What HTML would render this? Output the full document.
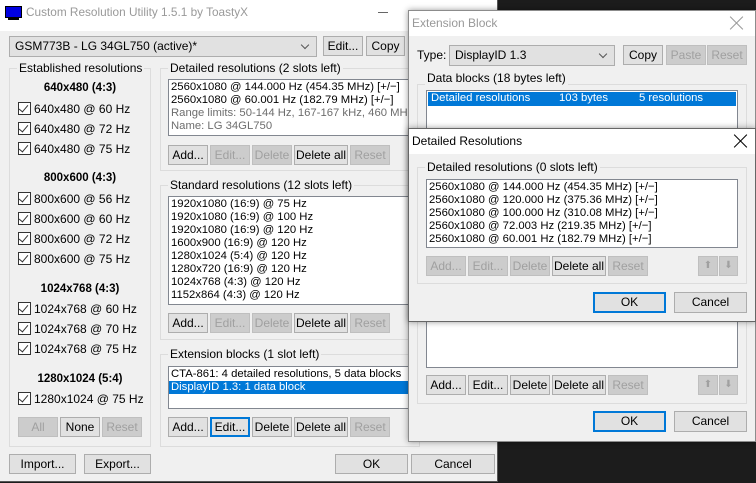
<!DOCTYPE html>
<html><head><meta charset="utf-8"><style>
*{box-sizing:border-box;margin:0;padding:0}
body{width:756px;height:483px;background:#1c1c1c;position:relative;overflow:hidden;font:12px "Liberation Sans",sans-serif;color:#000}
.a{position:absolute}
.win{position:absolute;background:#f0f0f0;border:1px solid #8c8c8c}
.b{position:absolute;height:20px;border:1px solid #adadad;background:#e1e1e1;text-align:center;line-height:18px;font-size:12px;white-space:nowrap}
.d{color:#a0a0a0;border-color:#bfbfbf;background:#cccccc}
.f{border:2px solid #0078d7;line-height:16px}
.g{position:absolute;border:1px solid #dcdcdc}
.gl{position:absolute;background:#f0f0f0;padding:0 2px;white-space:nowrap;line-height:14px}
.l{position:absolute;background:#fff;border:1px solid #828790;padding:1px 2px;line-height:13px;white-space:nowrap;overflow:hidden;font-size:11.3px}
.gray{color:#6d6d6d}
.sel{background:#0078d7;color:#fff;margin:0 -2px;padding:0 2px}
.cb{position:absolute;white-space:nowrap;line-height:14px;padding-left:16px}
.cb:before{content:"";position:absolute;left:0;top:0;width:11px;height:11px;border:1px solid #333;background:#fff}
.cb:after{content:"";position:absolute;left:3px;top:1px;width:4px;height:8px;border:solid #333;border-width:0 1px 1px 0;transform:rotate(40deg)}
.hd{position:absolute;font-weight:bold;text-align:center;width:142px;left:9px;font-size:11.5px}
.combo{position:absolute;height:21px;border:1px solid #adadad;background:#e1e1e1;line-height:19px;padding-left:5px}
.combo:after{content:"";position:absolute;right:8px;top:5px;width:5px;height:5px;border:solid #555;border-width:0 1px 1px 0;transform:rotate(45deg)}
.x{position:absolute;width:14px;height:14px}
.x:before,.x:after{content:"";position:absolute;left:6px;top:-2px;width:1px;height:18px;background:currentColor;transform:rotate(45deg)}
.x:after{transform:rotate(-45deg)}
</style></head><body>

<!-- main window -->
<div class="win" style="left:-1px;top:-1px;width:499px;height:483px;border-color:#555">
<div class="a" style="left:0;top:0;width:497px;height:31px;background:#fff"></div>
</div>
<div class="a" style="left:5px;top:6px;width:17px;height:12px;background:#0000e0;border:1px solid #000"></div>
<div class="a" style="left:8px;top:18px;width:11px;height:2px;background:#000"></div>
<div class="a" style="left:26px;top:5px;color:#999;font-size:11.8px">Custom Resolution Utility 1.5.1 by ToastyX</div>
<div class="a" style="left:378px;top:12px;width:10px;height:1px;background:#666"></div>

<div class="combo" style="left:9px;top:36px;width:308px">GSM773B - LG 34GL750 (active)*</div>
<div class="b" style="left:323px;top:36px;width:40px">Edit...</div>
<div class="b" style="left:366px;top:36px;width:39px">Copy</div>

<div class="g" style="left:9px;top:68px;width:142px;height:379px"></div>
<div class="gl" style="left:17px;top:61px">Established resolutions</div>
<div class="hd" style="top:82px">640x480 (4:3)</div>
<div class="cb" style="left:18px;top:102px">640x480 @ 60 Hz</div>
<div class="cb" style="left:18px;top:122px">640x480 @ 72 Hz</div>
<div class="cb" style="left:18px;top:142px">640x480 @ 75 Hz</div>
<div class="hd" style="top:172px">800x600 (4:3)</div>
<div class="cb" style="left:18px;top:192px">800x600 @ 56 Hz</div>
<div class="cb" style="left:18px;top:212px">800x600 @ 60 Hz</div>
<div class="cb" style="left:18px;top:232px">800x600 @ 72 Hz</div>
<div class="cb" style="left:18px;top:252px">800x600 @ 75 Hz</div>
<div class="hd" style="top:283px">1024x768 (4:3)</div>
<div class="cb" style="left:18px;top:302px">1024x768 @ 60 Hz</div>
<div class="cb" style="left:18px;top:322px">1024x768 @ 70 Hz</div>
<div class="cb" style="left:18px;top:342px">1024x768 @ 75 Hz</div>
<div class="hd" style="top:373px">1280x1024 (5:4)</div>
<div class="cb" style="left:18px;top:392px">1280x1024 @ 75 Hz</div>
<div class="b d" style="left:18px;top:417px;width:40px">All</div>
<div class="b" style="left:60px;top:417px;width:40px">None</div>
<div class="b d" style="left:102px;top:417px;width:40px">Reset</div>

<div class="g" style="left:160px;top:68px;width:260px;height:103px"></div>
<div class="gl" style="left:168px;top:61px">Detailed resolutions (2 slots left)</div>
<div class="l" style="left:168px;top:79px;width:250px;height:57px">2560x1080 @ 144.000 Hz (454.35 MHz) [+/&minus;]<br>2560x1080 @ 60.001 Hz (182.79 MHz) [+/&minus;]<br><span class="gray">Range limits: 50-144 Hz, 167-167 kHz, 460 MHz<br>Name: LG 34GL750</span></div>
<div class="b" style="left:168px;top:145px;width:40px">Add...</div>
<div class="b d" style="left:210px;top:145px;width:40px">Edit...</div>
<div class="b d" style="left:252px;top:145px;width:40px">Delete</div>
<div class="b" style="left:294px;top:145px;width:54px">Delete all</div>
<div class="b d" style="left:350px;top:145px;width:40px">Reset</div>

<div class="g" style="left:160px;top:185px;width:260px;height:155px"></div>
<div class="gl" style="left:168px;top:178px">Standard resolutions (12 slots left)</div>
<div class="l" style="left:168px;top:196px;width:250px;height:109px">1920x1080 (16:9) @ 75 Hz<br>1920x1080 (16:9) @ 100 Hz<br>1920x1080 (16:9) @ 120 Hz<br>1600x900 (16:9) @ 120 Hz<br>1280x1024 (5:4) @ 120 Hz<br>1280x720 (16:9) @ 120 Hz<br>1024x768 (4:3) @ 120 Hz<br>1152x864 (4:3) @ 120 Hz</div>
<div class="b" style="left:168px;top:313px;width:40px">Add...</div>
<div class="b d" style="left:210px;top:313px;width:40px">Edit...</div>
<div class="b d" style="left:252px;top:313px;width:40px">Delete</div>
<div class="b" style="left:294px;top:313px;width:54px">Delete all</div>
<div class="b d" style="left:350px;top:313px;width:40px">Reset</div>

<div class="g" style="left:160px;top:354px;width:260px;height:93px"></div>
<div class="gl" style="left:168px;top:347px">Extension blocks (1 slot left)</div>
<div class="l" style="left:168px;top:366px;width:250px;height:43px">CTA-861: 4 detailed resolutions, 5 data blocks<br><div class="sel">DisplayID 1.3: 1 data block</div></div>
<div class="b" style="left:168px;top:417px;width:40px">Add...</div>
<div class="b f" style="left:210px;top:417px;width:40px">Edit...</div>
<div class="b" style="left:252px;top:417px;width:40px">Delete</div>
<div class="b" style="left:294px;top:417px;width:54px">Delete all</div>
<div class="b d" style="left:350px;top:417px;width:40px">Reset</div>

<div class="b" style="left:9px;top:454px;width:67px">Import...</div>
<div class="b" style="left:84px;top:454px;width:67px">Export...</div>
<div class="b" style="left:335px;top:454px;width:73px">OK</div>
<div class="b" style="left:411px;top:454px;width:84px">Cancel</div>

<!-- Extension block window -->
<div class="win" style="left:408px;top:10px;width:348px;height:432px;box-shadow:0 0 6px rgba(0,0,0,.4)">
<div class="a" style="left:0;top:0;width:346px;height:25px;background:#fff"></div>
</div>
<div class="a" style="left:412px;top:16px;color:#999;font-size:12px">Extension Block</div>
<div class="x" style="left:730px;top:16px;color:#999"></div>
<div class="a" style="left:417px;top:48px">Type:</div>
<div class="combo" style="left:449px;top:45px;width:166px">DisplayID 1.3</div>
<div class="b" style="left:623px;top:45px;width:40px">Copy</div>
<div class="b d" style="left:666px;top:45px;width:40px">Paste</div>
<div class="b d" style="left:707px;top:45px;width:40px">Reset</div>
<div class="g" style="left:417px;top:84px;width:330px;height:320px"></div>
<div class="gl" style="left:425px;top:71px">Data blocks (18 bytes left)</div>
<div class="l" style="left:426px;top:90px;width:312px;height:278px;padding-top:1px"><div class="sel" style="position:relative;height:14px;margin:0 -1px;padding:0 3px">Detailed resolutions<span class="a" style="left:131px">103 bytes</span><span class="a" style="left:211px">5 resolutions</span></div></div>
<div class="b" style="left:426px;top:375px;width:40px">Add...</div>
<div class="b" style="left:468px;top:375px;width:40px">Edit...</div>
<div class="b" style="left:510px;top:375px;width:40px">Delete</div>
<div class="b" style="left:552px;top:375px;width:54px">Delete all</div>
<div class="b d" style="left:608px;top:375px;width:40px">Reset</div>
<div class="b d" style="left:698px;top:375px;width:20px;font-size:10px">&#x2B06;</div>
<div class="b d" style="left:719px;top:375px;width:19px;font-size:10px">&#x2B07;</div>
<div class="b f" style="left:593px;top:411px;width:73px;height:21px">OK</div>
<div class="b" style="left:674px;top:411px;width:73px;height:21px">Cancel</div>

<!-- Detailed Resolutions window -->
<div class="win" style="left:408px;top:128px;width:348px;height:194px;border-color:#666;box-shadow:0 0 6px rgba(0,0,0,.4)">
<div class="a" style="left:0;top:0;width:346px;height:25px;background:#fff"></div>
</div>
<div class="a" style="left:412px;top:134px;font-size:12px">Detailed Resolutions</div>
<div class="x" style="left:734px;top:134px;color:#000"></div>
<div class="g" style="left:417px;top:167px;width:330px;height:117px"></div>
<div class="gl" style="left:425px;top:160px">Detailed resolutions (0 slots left)</div>
<div class="l" style="left:426px;top:179px;width:312px;height:69px">2560x1080 @ 144.000 Hz (454.35 MHz) [+/&minus;]<br>2560x1080 @ 120.000 Hz (375.36 MHz) [+/&minus;]<br>2560x1080 @ 100.000 Hz (310.08 MHz) [+/&minus;]<br>2560x1080 @ 72.003 Hz (219.35 MHz) [+/&minus;]<br>2560x1080 @ 60.001 Hz (182.79 MHz) [+/&minus;]</div>
<div class="b d" style="left:426px;top:256px;width:40px">Add...</div>
<div class="b d" style="left:468px;top:256px;width:40px">Edit...</div>
<div class="b d" style="left:510px;top:256px;width:40px">Delete</div>
<div class="b" style="left:552px;top:256px;width:54px">Delete all</div>
<div class="b d" style="left:608px;top:256px;width:40px">Reset</div>
<div class="b d" style="left:698px;top:256px;width:20px;font-size:10px">&#x2B06;</div>
<div class="b d" style="left:719px;top:256px;width:19px;font-size:10px">&#x2B07;</div>
<div class="b f" style="left:593px;top:292px;width:73px;height:21px">OK</div>
<div class="b" style="left:674px;top:292px;width:73px;height:21px">Cancel</div>
</body></html>
